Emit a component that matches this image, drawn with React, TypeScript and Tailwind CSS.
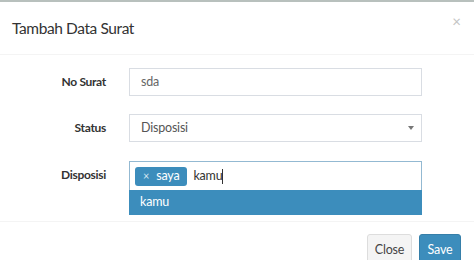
export default function App() {
  return (
    <div className="w-[474px] h-[260px] bg-white overflow-hidden relative font-['Lato',sans-serif] text-[#333]">
      <div className="h-[2px] bg-[#b8c0bd]" />

      {/* header */}
      <div className="h-[53px] flex items-center justify-between pl-3 pr-[13px] border-b border-[#f4f4f4]">
        <h4 className="text-[15.5px] leading-none tracking-[-0.4px] mt-[1px]">Tambah Data Surat</h4>
        <span className="text-[#c4c4c4] text-[15px] leading-none -mt-[14px]">×</span>
      </div>

      {/* body */}
      <div className="pt-[13px] pb-[6px] border-b border-[#f4f4f4] text-[12.5px] tracking-[-0.2px]">
        <div className="flex items-center h-[28px]">
          <label className="w-[106px] text-right text-[12px] font-bold tracking-[-0.3px]">No Surat</label>
          <div className="ml-[23px] w-[293px] h-[28px] border border-[#d9dde3] flex items-center px-[11px] text-[#666]">
            sda
          </div>
        </div>

        <div className="flex items-center h-[28px] mt-[18px]">
          <label className="w-[106px] text-right text-[12px] font-bold tracking-[-0.3px]">Status</label>
          <div className="ml-[23px] w-[293px] h-[28px] border border-[#d9dde3] flex items-center justify-between pl-[11px] pr-[7px] text-[#555]">
            <span>Disposisi</span>
            <span className="w-0 h-0 border-l-[3.5px] border-r-[3.5px] border-t-[4px] border-l-transparent border-r-transparent border-t-[#777]" />
          </div>
        </div>

        <div className="flex items-start mt-[19px]">
          <label className="w-[106px] h-[28px] flex items-center justify-end text-[12px] font-bold tracking-[-0.3px]">Disposisi</label>
          <div className="ml-[23px] w-[293px]">
            <div className="h-[29px] border border-[#93b9d2] border-b-0 flex items-center px-[5px] gap-[6px]">
              <span className="h-[19px] px-[8px] rounded-[3px] bg-[#3c8dbc] text-white flex items-center gap-[7px]">
                <span className="text-[11px] text-[#d6e7f2]">×</span>
                <span>saya</span>
              </span>
              <span className="flex items-center">
                kamu<span className="w-px h-[15px] bg-[#333]" />
              </span>
            </div>
            <div className="h-[25px] bg-[#3c8dbc] text-white flex items-center px-[11px]">kamu</div>
          </div>
        </div>
      </div>

      {/* footer */}
      <div className="flex justify-end gap-[7px] pt-[12px] pr-[13px] text-[12.5px] tracking-[-0.2px]">
        <button className="h-[32px] w-[45px] bg-[#f4f4f4] border border-[#ddd] rounded-[3px] text-[#444]">Close</button>
        <button className="h-[32px] w-[42px] bg-[#3c8dbc] border border-[#367fa9] rounded-[3px] text-white">Save</button>
      </div>
    </div>
  );
}
